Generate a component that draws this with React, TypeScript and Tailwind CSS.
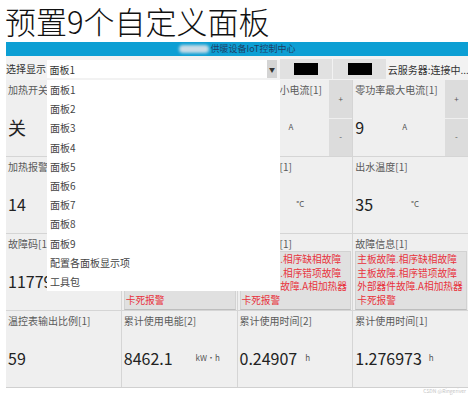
import React from "react";

const FONT = { fontFamily: '"Noto Sans CJK SC", "Noto Sans", sans-serif' };

function Label({ children }: { children: React.ReactNode }) {
  return (
    <div className="pl-[2px] pt-[3px] text-[10px] leading-[14px] text-[#5a5a5a] whitespace-nowrap overflow-hidden">
      {children}
    </div>
  );
}

function ValueRow({
  value,
  unit,
  unitClass,
  big,
}: {
  value: string;
  unit?: string;
  unitClass?: string;
  big?: boolean;
}) {
  return (
    <div className="mt-[20px] flex items-center pl-[2px] h-[20px] whitespace-nowrap">
      <span className={big ? "text-[18px] leading-[20px] text-[#222]" : "text-[16px] leading-[20px] text-[#222]"}>
        {value}
      </span>
      {unit ? <span className={"text-[8px] text-[#555] " + (unitClass ?? "")}>{unit}</span> : null}
    </div>
  );
}

function Cell({ children }: { children: React.ReactNode }) {
  return <div className="bg-[#efefef] flex flex-col overflow-hidden">{children}</div>;
}

function PMCell({ label, value, unit, unitClass }: { label: string; value: string; unit: string; unitClass: string }) {
  return (
    <div className="bg-[#efefef] flex overflow-hidden">
      <div className="flex-1 flex flex-col min-w-0">
        <Label>{label}</Label>
        <ValueRow value={value} unit={unit} unitClass={unitClass} />
      </div>
      <div className="w-[23px] flex flex-col gap-px">
        <div className="flex-1 bg-[#dcdcdc] flex items-center justify-center text-[8px] text-[#555]">+</div>
        <div className="flex-1 bg-[#dcdcdc] flex items-center justify-center text-[8px] text-[#555]">-</div>
      </div>
    </div>
  );
}

function FaultCell({ label }: { label: string }) {
  return (
    <div className="bg-[#efefef] flex flex-col overflow-hidden">
      <Label>{label}</Label>
      <div className="flex-1 ml-[2px] mr-[1px] bg-[#e0e0e0] border border-[#d2d2d2] border-b-dashed border-b-[#bdbdbd] px-[1px] pt-px text-[9.7px] leading-[13.5px] text-[#e8323c] whitespace-nowrap overflow-hidden">
        <div>主板故障.相序缺相故障</div>
        <div>主板故障.相序错项故障</div>
        <div>外部器件故障.A相加热器</div>
        <div>卡死报警</div>
      </div>
    </div>
  );
}

const items = ["面板1", "面板2", "面板3", "面板4", "面板5", "面板6", "面板7", "面板8", "面板9", "配置各面板显示项", "工具包"];

export default function App() {
  return (
    <div className="w-[474px] h-[395px] bg-white overflow-hidden relative" style={FONT}>
      <div className="h-[42px] pl-[5px] text-[31px] leading-[42px] font-light text-[#111] whitespace-nowrap">
        预置9个自定义面板
      </div>
      <div className="mx-[6px] bg-[#f2f2f2]">
        <div className="h-[14px] bg-[#0c9fd4] flex items-center justify-center text-[9px] leading-[14px] text-[#1f3f66] whitespace-nowrap">
          <div className="w-[30px] h-[8px] mr-[2px] bg-[#c9dbe6] blur-[1.5px] rounded-sm" />
          <span>供暖设备IoT控制中心</span>
        </div>
        <div className="relative">
          <div className="h-[20px] mt-[3px] flex items-center">
            <div className="w-[41px] text-[10px] leading-[14px] text-[#333] whitespace-nowrap">选择显示</div>
            <div className="w-[223px] h-[18px] bg-white pl-[3px] flex items-center text-[10px] text-[#333]">面板1</div>
            <div className="w-[10px] h-[18px] bg-[#d4d4d4] flex items-center justify-center text-[6px] text-[#333]">▼</div>
            <div className="ml-[3px] w-[53px] h-[20px] bg-[#e1e1e1] flex items-center justify-center">
              <div className="w-[24px] h-[12px] bg-black" />
            </div>
            <div className="ml-px w-[53px] h-[20px] bg-[#e1e1e1] flex items-center justify-center">
              <div className="w-[24px] h-[12px] bg-black" />
            </div>
            <div className="ml-[2px] text-[10px] text-[#333] whitespace-nowrap overflow-hidden">云服务器:连接中...</div>
          </div>
          <div className="mt-px grid grid-cols-4 grid-rows-[repeat(4,76px)] gap-px bg-[#d5d5d5] border-b border-[#d0d0d0]">
            <Cell>
              <Label>加热开关[1]</Label>
              <ValueRow value="关" big />
            </Cell>
            <Cell>
              <Label>最小功率[1]</Label>
              <ValueRow value="0" />
            </Cell>
            <PMCell label="零功率最小电流[1]" value="2" unit="A" unitClass="ml-[40px]" />
            <PMCell label="零功率最大电流[1]" value="9" unit="A" unitClass="ml-[38px]" />

            <Cell>
              <Label>加热报警[1]</Label>
              <ValueRow value="14" />
            </Cell>
            <Cell>
              <Label>回水温度[1]</Label>
              <ValueRow value="30" />
            </Cell>
            <Cell>
              <Label>进水温度[1]</Label>
              <ValueRow value="33" unit="°C" unitClass="ml-[39px]" />
            </Cell>
            <Cell>
              <Label>出水温度[1]</Label>
              <ValueRow value="35" unit="°C" unitClass="ml-[38px]" />
            </Cell>

            <Cell>
              <Label>故障码[1]</Label>
              <ValueRow value="11779" />
            </Cell>
            <FaultCell label="故障信息[2]" />
            <FaultCell label="故障信息[1]" />
            <FaultCell label="故障信息[1]" />

            <Cell>
              <Label>温控表输出比例[1]</Label>
              <ValueRow value="59" />
            </Cell>
            <Cell>
              <Label>累计使用电能[2]</Label>
              <ValueRow value="8462.1" unit="kW·h" unitClass="ml-[23px]" />
            </Cell>
            <Cell>
              <Label>累计使用时间[2]</Label>
              <ValueRow value="0.24907" unit="h" unitClass="ml-[8px]" />
            </Cell>
            <Cell>
              <Label>累计使用时间[1]</Label>
              <ValueRow value="1.276973" unit="h" unitClass="ml-[7px]" />
            </Cell>
          </div>
          <div className="absolute left-[41px] top-[21px] w-[233px] bg-white flex flex-col">
            {items.map((t) => (
              <div key={t} className="h-[19.2px] pl-[3px] flex items-center text-[10px] text-[#444] whitespace-nowrap">
                {t}
              </div>
            ))}
          </div>
        </div>
      </div>
      <div className="absolute right-[8px] bottom-[1px] text-[5px] leading-[6px] text-[#c4c4c4] whitespace-nowrap">
        CSDN @Ringeriver
      </div>
    </div>
  );
}
